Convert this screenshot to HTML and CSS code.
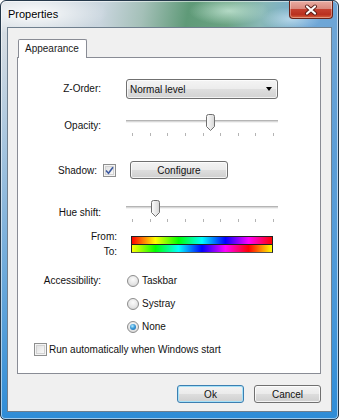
FILE: index.html
```html
<!DOCTYPE html>
<html>
<head>
<meta charset="utf-8">
<title>Properties</title>
<link rel="stylesheet" href="styles.css">
</head>
<body>
<div class="window">
  <div class="titlebar">
    <span class="title">Properties</span>
    <div class="close">
      <svg width="16" height="12" viewBox="0 0 16 12">
        <path d="M4 2.5 L12 9.5 M12 2.5 L4 9.5" stroke="#5a1f18" stroke-width="4" stroke-linecap="round"/>
        <path d="M4 2.5 L12 9.5 M12 2.5 L4 9.5" stroke="#ffffff" stroke-width="2.2" stroke-linecap="round"/>
      </svg>
    </div>
  </div>
  <div class="client">
    <div class="tabs"><div class="tab">Appearance</div></div>
    <div class="panel">
      <div class="row row-z">
        <div class="label">Z-Order:</div>
        <div class="combo"><span>Normal level</span><span class="arrow"></span></div>
      </div>
      <div class="row row-op">
        <div class="label label-slider">Opacity:</div>
        <div class="slider">
          <div class="track"></div>
          <div class="thumb" style="left: 79px">
            <svg width="11" height="18" viewBox="0 0 11 18"><defs><linearGradient id="tg1" x1="0" x2="1" y1="0" y2="0"><stop offset="0" stop-color="#fefefe"/><stop offset="1" stop-color="#d6d6d6"/></linearGradient></defs><path d="M1.5 2.5 Q1.5 0.5 3.5 0.5 H7.5 Q9.5 0.5 9.5 2.5 V12.5 L5.5 16.5 L1.5 12.5 Z" fill="url(#tg1)" stroke="#707070"/></svg>
          </div>
          <div class="ticks"><i></i><i></i><i></i><i></i><i></i><i></i><i></i><i></i><i></i></div>
        </div>
      </div>
      <div class="row row-shadow">
        <div class="label2">Shadow:<span class="check on"><svg width="9" height="9" viewBox="0 0 9 9"><path d="M1 4.5 L3.5 7.2 L8 1.2" fill="none" stroke="#3d5aa0" stroke-width="1.6"/></svg></span></div>
        <button class="btn btn-config">Configure</button>
      </div>
      <div class="row row-hue">
        <div class="label label-slider2">Hue shift:</div>
        <div class="slider">
          <div class="track"></div>
          <div class="thumb" style="left: 24px">
            <svg width="11" height="18" viewBox="0 0 11 18"><defs><linearGradient id="tg2" x1="0" x2="1" y1="0" y2="0"><stop offset="0" stop-color="#fefefe"/><stop offset="1" stop-color="#d6d6d6"/></linearGradient></defs><path d="M1.5 2.5 Q1.5 0.5 3.5 0.5 H7.5 Q9.5 0.5 9.5 2.5 V12.5 L5.5 16.5 L1.5 12.5 Z" fill="url(#tg2)" stroke="#707070"/></svg>
          </div>
          <div class="ticks"><i></i><i></i><i></i><i></i><i></i><i></i><i></i><i></i><i></i></div>
        </div>
      </div>
      <div class="row row-grad">
        <div class="label2 stack"><div>From:</div><div>To:</div></div>
        <div class="grad">
          <div class="bar bar-from"></div>
          <div class="bar bar-to"></div>
        </div>
      </div>
      <div class="row row-acc">
        <div class="label label-acc">Accessibility:</div>
        <div class="radios">
          <div class="ropt"><span class="radio"></span>Taskbar</div>
          <div class="ropt"><span class="radio"></span>Systray</div>
          <div class="ropt"><span class="radio on"></span>None</div>
        </div>
      </div>
      <div class="runrow"><span class="check"></span>Run automatically when Windows start</div>
    </div>
    <div class="buttons">
      <button class="btn btn-default">Ok</button>
      <button class="btn">Cancel</button>
    </div>
  </div>
</div>
</body>
</html>
```
FILE: styles.css
```css
* { box-sizing: border-box; }
html, body { margin: 0; padding: 0; }
body {
  width: 339px;
  height: 420px;
  background: #ffffff;
  font-family: "Liberation Sans", Arial, sans-serif;
  font-size: 10px;
  color: #111;
  overflow: hidden;
}
.window {
  width: 339px;
  height: 420px;
  border: 1px solid #25384a;
  border-radius: 6px 6px 5px 5px;
  display: flex;
  flex-direction: column;
  background:
    radial-gradient(ellipse 75px 22px at 32px 12px, rgba(255,255,255,0.9), rgba(255,255,255,0) 100%),
    radial-gradient(ellipse 40px 14px at 228px 10px, rgba(210,240,225,0.7), rgba(210,240,225,0) 100%),
    radial-gradient(ellipse 30px 12px at 290px 18px, rgba(220,240,255,0.6), rgba(220,240,255,0) 100%),
    linear-gradient(to bottom, rgba(60,145,215,0) 0, rgba(60,145,215,0) 40px, rgba(60,145,215,0.45) 200px, rgba(45,140,215,1) 420px),
    linear-gradient(100deg, #d6dde3 0%, #c9d5de 25%, #a4c0b8 35%, #5f9a78 46%, #6aa383 56%, #88b8b6 64%, #6fa7d6 76%, #6aa3d6 88%, #8bb9e0 100%);
  box-shadow: inset 0 0 0 1px rgba(255,255,255,0.55);
}
.titlebar {
  height: 26px;
  display: flex;
  justify-content: space-between;
  align-items: flex-start;
  padding-left: 7px;
  padding-right: 5px;
}
.title {
  font-size: 11px;
  line-height: 26px;
  color: #000;
  text-shadow: 0 0 6px #fff, 0 0 3px #fff;
}
.close {
  width: 44px;
  height: 18px;
  border: 1px solid #6a2219;
  border-top: none;
  border-radius: 0 0 4px 4px;
  background: linear-gradient(to bottom, #e9aca2 0%, #d98a7e 45%, #c4402f 50%, #b9301f 80%, #d8643f 100%);
  box-shadow: inset 0 0 0 1px rgba(255,255,255,0.35);
  display: flex;
  align-items: center;
  justify-content: center;
}
.client {
  flex: 1;
  margin: 0 6px 7px 6px;
  border: 1px solid #6f7f8e;
  background: #f0f0f0;
  display: flex;
  flex-direction: column;
  padding-top: 11px;
}
.tabs {
  display: flex;
  padding-left: 10px;
  position: relative;
  z-index: 1;
}
.tab {
  width: 69px;
  height: 19px;
  margin-bottom: -1px;
  background: #fff;
  border: 1px solid #898c95;
  border-bottom: none;
  border-radius: 2px 2px 0 0;
  padding-left: 6px;
  line-height: 17px;
  color: #1a1a1a;
}
.panel {
  flex: 1;
  margin: 0 10px 0 9px;
  background: #fff;
  border: 1px solid #898c95;
  padding-top: 21px;
  display: flex;
  flex-direction: column;
}
.row {
  display: flex;
  align-items: flex-start;
}
.label {
  width: 83px;
  text-align: right;
  margin-right: 25px;
  flex: none;
}
.row-z { height: 20px; }
.row-z .label { line-height: 20px; }
.combo {
  width: 152px;
  height: 20px;
  border: 1px solid #707070;
  border-radius: 3px;
  background: linear-gradient(to bottom, #f4f4f4 0%, #ececec 48%, #dedede 52%, #d2d2d2 100%);
  box-shadow: inset 0 0 0 1px rgba(255,255,255,0.7);
  display: flex;
  align-items: center;
  justify-content: space-between;
  padding: 0 5px 0 3px;
}
.arrow {
  width: 0;
  height: 0;
  border-left: 3.5px solid transparent;
  border-right: 3.5px solid transparent;
  border-top: 4px solid #000;
}
.row-op { margin-top: 14px; height: 24px; }
.label-slider { padding-top: 7px; line-height: 12px; }
.slider {
  width: 152px;
  height: 24px;
  position: relative;
  display: flex;
  flex-direction: column;
  padding-top: 7px;
}
.track {
  height: 3px;
  border-top: 1px solid #b5b5b5;
  border-bottom: 1px solid #f2f2f2;
  background: #d8d8d8;
}
.thumb {
  position: absolute;
  top: 1px;
  width: 11px;
  height: 18px;
}
.thumb svg { display: block; }
.ticks {
  display: flex;
  justify-content: space-between;
  padding: 0 4px 0 6px;
  margin-top: 10px;
  height: 3px;
}
.ticks i {
  display: block;
  width: 1px;
  height: 3px;
  background: #b4b4b4;
}
.row-shadow { margin-top: 24px; height: 18px; align-items: center; }
.label2 {
  width: 98px;
  flex: none;
  display: flex;
  justify-content: flex-end;
  align-items: center;
}
.check {
  width: 13px;
  height: 13px;
  border: 1px solid #8e8f8f;
  background: linear-gradient(135deg, #dcdcdc 0%, #f4f4f4 70%, #ffffff 100%);
  box-shadow: inset 0 0 0 1px #f4f4f4, inset 0 0 0 2px #d2d2d2;
  display: inline-flex;
  align-items: center;
  justify-content: center;
  flex: none;
}
.label2 .check { margin-left: 6px; }
.btn {
  font-family: "Liberation Sans", Arial, sans-serif;
  font-size: 10px;
  color: #111;
  height: 18px;
  border: 1px solid #707070;
  border-radius: 3px;
  background: linear-gradient(to bottom, #f3f3f3 0%, #ebebeb 48%, #dddddd 52%, #cfcfcf 100%);
  box-shadow: inset 0 0 0 1px rgba(255,255,255,0.75);
  padding: 0;
  margin: 0;
}
.btn-config { width: 98px; margin-left: 14px; }
.row-hue { margin-top: 20px; height: 24px; }
.label-slider2 { padding-top: 8px; line-height: 12px; }
.row-grad { margin-top: 6px; }
.stack {
  flex-direction: column;
  align-items: flex-end;
  width: 99px;
  line-height: 15px;
}
.grad {
  margin-left: 14px;
  margin-top: 7px;
  width: 142px;
  height: 17px;
  border: 1px solid #222;
  border-bottom-color: #555;
  display: flex;
  flex-direction: column;
  gap: 1px;
  background: #222;
}
.bar { height: 7px; }
.bar-from {
  background: linear-gradient(to right, #ff0000 0%, #ffff00 16.7%, #00ff00 33.3%, #00ffff 50%, #0000ff 66.7%, #ff00ff 83.3%, #ff0000 100%);
}
.bar-to {
  background: linear-gradient(to right, #ffff00 0%, #00ff00 16.7%, #00ffff 33.3%, #0000ff 50%, #ff00ff 66.7%, #ff0000 83.3%, #ffff00 100%);
}
.row-acc { margin-top: 10px; }
.label-acc { line-height: 23px; }
.radios {
  display: flex;
  flex-direction: column;
  padding-left: 1px;
}
.ropt {
  display: flex;
  align-items: center;
  height: 23px;
}
.radio {
  width: 12px;
  height: 12px;
  border-radius: 50%;
  border: 1px solid #8c8c8c;
  background: radial-gradient(circle at 50% 35%, #fbfbfb 0%, #e6e6e6 55%, #cfcfcf 100%);
  margin-right: 3px;
  display: inline-flex;
  align-items: center;
  justify-content: center;
  flex: none;
}
.radio.on::after {
  content: "";
  display: block;
  width: 6px;
  height: 6px;
  border-radius: 50%;
  background: radial-gradient(circle at 40% 35%, #b6ecff 0%, #3b9ad8 45%, #1b5e9e 100%);
}
.runrow {
  margin-top: 5px;
  padding-left: 16px;
  display: flex;
  align-items: center;
  height: 13px;
}
.runrow .check { margin-right: 2px; }
.buttons {
  display: flex;
  justify-content: flex-end;
  gap: 10px;
  margin: 11px 10px 8px 0;
}
.buttons .btn { width: 67px; }
.btn-default {
  border-color: #3c7fb1;
  box-shadow: inset 0 0 0 1px #a6e1f8;
}
```
